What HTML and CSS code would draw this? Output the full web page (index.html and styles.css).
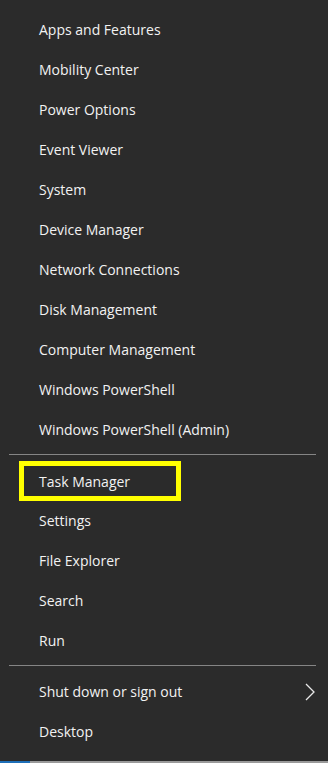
FILE: index.html
```html
<!DOCTYPE html>
<html lang="en">
<head>
    <meta charset="UTF-8">
    <meta name="viewport" content="width=device-width, initial-scale=1.0">
    <title>Quick Link Menu</title>
    <link rel="stylesheet" href="styles.css">
</head>
<body>
    <div class="menu">
        <ul class="group">
            <li class="item">Apps and Features</li>
            <li class="item">Mobility Center</li>
            <li class="item">Power Options</li>
            <li class="item">Event Viewer</li>
            <li class="item">System</li>
            <li class="item">Device Manager</li>
            <li class="item">Network Connections</li>
            <li class="item">Disk Management</li>
            <li class="item">Computer Management</li>
            <li class="item">Windows PowerShell</li>
            <li class="item">Windows PowerShell (Admin)</li>
        </ul>
        <div class="separator"></div>
        <ul class="group">
            <li class="item highlight">Task Manager</li>
            <li class="item">Settings</li>
            <li class="item">File Explorer</li>
            <li class="item">Search</li>
            <li class="item">Run</li>
        </ul>
        <div class="separator"></div>
        <ul class="group">
            <li class="item submenu">
                <span>Shut down or sign out</span>
                <svg class="chevron" width="10" height="18" viewBox="0 0 10 18">
                    <path d="M1 1 L9 9 L1 17" fill="none" stroke="#e8e8e8" stroke-width="1.3"/>
                </svg>
            </li>
            <li class="item">Desktop</li>
        </ul>
    </div>
    <div class="taskbar"></div>
</body>
</html>
```

FILE: styles.css
```css
html, body {
    margin: 0;
    padding: 0;
}
body {
    width: 328px;
    height: 763px;
    background: #2b2b2b;
    font-family: "Open Sans", "Noto Sans", sans-serif;
    color: #f2f2f2;
    display: flex;
    flex-direction: column;
    overflow: hidden;
}
.menu {
    flex: 1;
    padding-top: 10px;
}
.group {
    list-style: none;
    margin: 0;
    padding: 0;
}
.item {
    height: 40px;
    display: flex;
    align-items: center;
    padding-left: 39px;
    padding-bottom: 2px;
    font-size: 14px;
    box-sizing: border-box;
}
.separator {
    height: 1px;
    background: #858585;
    margin: 4px 12px 6px 9px;
}
.highlight {
    margin-left: 19px;
    width: 162px;
    padding-left: 15px;
    padding-bottom: 0;
    border: 5px solid #ffff00;
}
.submenu {
    justify-content: space-between;
    padding-right: 13px;
}
.chevron {
    display: block;
    margin-top: 2px;
}
.taskbar {
    height: 2px;
    background: linear-gradient(to right, #1e6fb8 0, #1e6fb8 30px, #9a9a9a 30px);
}
```
